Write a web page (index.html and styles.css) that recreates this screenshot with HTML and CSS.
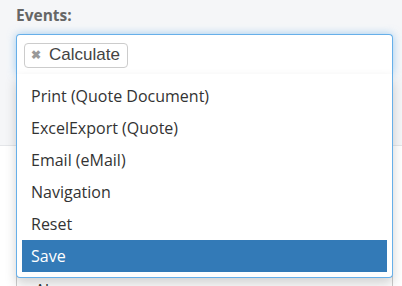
FILE: index.html
```html
<!DOCTYPE html>
<html lang="en">
  <head>
    <meta charset="UTF-8" />
    <meta name="viewport" content="width=device-width, initial-scale=1.0" />
    <title>Events</title>
    <link rel="stylesheet" href="styles.css">
  </head>
  <body>
    <div class="top-panel">
      <label class="field-label">Events:</label>
      <div class="select-box">
        <div class="selection">
          <span class="tag"><span class="tag-remove">&#10006;</span>Calculate</span>
        </div>
        <ul class="dropdown">
          <li>Print (Quote Document)</li>
          <li>ExcelExport (Quote)</li>
          <li>Email (eMail)</li>
          <li>Navigation</li>
          <li>Reset</li>
          <li class="highlighted">Save</li>
        </ul>
      </div>
    </div>
    <div class="bottom-panel">
      <div class="other-field">Always</div>
    </div>
  </body>
</html>
```

FILE: styles.css
```css
body {
  margin: 0;
  padding: 0;
  font-family: "Open Sans", Arial, sans-serif;
  background-color: #fff;
  color: #333;
  overflow: hidden;
}
.top-panel {
  background-color: #f5f6f8;
  height: 146px;
  padding: 5px 16px 0 16px;
  border-bottom: 1px solid #e4e6e9;
  box-sizing: border-box;
}
.field-label {
  display: block;
  font-weight: bold;
  font-size: 15.5px;
  line-height: 20px;
  color: #666;
  margin-bottom: 9px;
}
.select-box {
  position: relative;
  width: 377px;
  z-index: 2;
}
.selection {
  height: 40px;
  box-sizing: border-box;
  background-color: #fff;
  border: 1px solid #66afe9;
  border-bottom: none;
  border-radius: 4px 4px 0 0;
  padding: 7px 0 0 7px;
  box-shadow: 0 0 8px rgba(102, 175, 233, 0.6);
}
.tag {
  display: inline-flex;
  align-items: center;
  height: 25px;
  box-sizing: border-box;
  padding: 0 7px 0 6px;
  border: 1px solid #ccc;
  border-radius: 4px;
  font-family: "Liberation Sans", Arial, sans-serif;
  font-size: 17px;
  color: #444;
}
.tag-remove {
  color: #999;
  font-size: 12px;
  font-weight: bold;
  margin-right: 8px;
}
.dropdown {
  position: absolute;
  left: 0;
  right: 0;
  top: 40px;
  margin: 0;
  padding: 6px 5px 5px 5px;
  list-style: none;
  background-color: #fff;
  border: 1px solid #66afe9;
  border-top: none;
  border-radius: 0 0 4px 4px;
  box-shadow: 0 6px 12px rgba(0, 0, 0, 0.175);
}
.dropdown li {
  height: 32px;
  line-height: 32px;
  padding: 0 9px;
  font-size: 16px;
  color: #333;
}
.dropdown li.highlighted {
  background-color: #337ab7;
  color: #fff;
}
.bottom-panel {
  padding: 116px 9px 0 16px;
}
.other-field {
  height: 40px;
  width: 377px;
  box-sizing: border-box;
  border: 1px solid #ccc;
  border-radius: 4px;
  padding: 17px 0 0 18px;
  font-size: 16px;
  line-height: 20px;
}
```
